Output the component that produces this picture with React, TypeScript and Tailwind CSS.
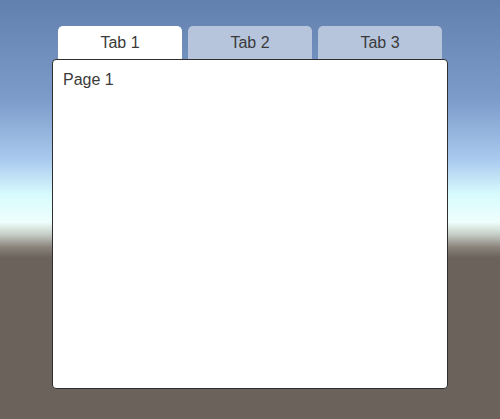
const tabs = ['Tab 1', 'Tab 2', 'Tab 3'];

export default function App() {
  return (
    <div
      className="h-[419px] w-[500px] overflow-hidden pl-[52px] pt-[26px] font-['Liberation_Sans',Arial,sans-serif]"
      style={{
        background:
          'linear-gradient(to bottom, #6280ad 0%, #7d9cca 24%, #a9c9ee 38%, #d8fbfe 46.5%, #eefffb 53%, #c5cdc6 56%, #8a837c 59%, #6c625c 61.5%, #6b625c 100%)',
      }}
    >
      {/* tab strip */}
      <div className="flex h-[33px] gap-[6px] pl-[6px]">
        {tabs.map((label, i) => (
          <div
            key={label}
            className={`flex w-[124px] items-center justify-center rounded-t-[5px] pt-[1px] text-[16px] text-[#3a3a3a] ${
              i === 0 ? 'bg-white' : 'bg-[#b6c5dc]'
            }`}
          >
            {label}
          </div>
        ))}
      </div>

      {/* page body */}
      <div className="h-[330px] w-[396px] rounded-[4px] border border-[#2e2e2e] bg-white px-[10px] pt-[11px] text-[16px] leading-[18px] text-[#3a3a3a]">
        Page 1
      </div>
    </div>
  );
}
